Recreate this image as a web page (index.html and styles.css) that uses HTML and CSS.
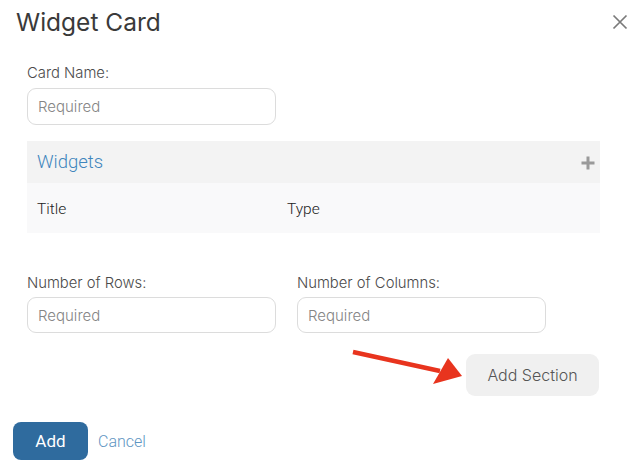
FILE: index.html
```html
<!DOCTYPE html>
<html>
<head>
<meta charset="utf-8">
<link rel="stylesheet" href="styles.css">
</head>
<body>
<div class="dialog">
  <div class="header">
    <h1 class="title">Widget Card</h1>
    <span class="close" aria-label="Close">
      <svg width="16" height="16" viewBox="0 0 16 16"><path d="M1.5 1.5 L14.5 14.5 M14.5 1.5 L1.5 14.5" stroke="#7a7a7a" stroke-width="1.7" fill="none"/></svg>
    </span>
  </div>
  <div class="content">
    <div class="field">
      <label class="label">Card Name:</label>
      <div class="input">Required</div>
    </div>
    <div class="panel">
      <div class="panel-head">
        <span class="panel-title">Widgets</span>
        <svg class="plus" width="14" height="14" viewBox="0 0 14 14"><path d="M7 0.5 V13.5 M0.5 7 H13.5" stroke="#9a9a9a" stroke-width="3" fill="none"/></svg>
      </div>
      <div class="panel-row">
        <span class="col col-title">Title</span>
        <span class="col">Type</span>
      </div>
    </div>
    <div class="pair">
      <div class="field">
        <label class="label">Number of Rows:</label>
        <div class="input">Required</div>
      </div>
      <div class="field">
        <label class="label">Number of Columns:</label>
        <div class="input">Required</div>
      </div>
    </div>
    <div class="section-row">
      <button class="section-btn">Add Section</button>
    </div>
  </div>
  <div class="footer">
    <button class="add-btn">Add</button>
    <a class="cancel">Cancel</a>
  </div>
  <svg class="arrow" width="642" height="473" viewBox="0 0 642 473">
    <path d="M353 352 L440 371" stroke="#e8341e" stroke-width="4.5" fill="none"/>
    <path d="M462 376 L433 384 L448 358 Z" fill="#e8341e"/>
  </svg>
</div>
</body>
</html>
```
FILE: styles.css
```css
html, body {
  margin: 0;
  padding: 0;
  background: #fff;
}
.dialog {
  position: relative;
  width: 642px;
  height: 473px;
  box-sizing: border-box;
  padding: 0 14px 0 16px;
  font-family: "Inter", "Liberation Sans", sans-serif;
  color: #444;
}
.header {
  display: flex;
  justify-content: space-between;
  align-items: center;
  height: 44px;
}
.title {
  margin: 0;
  font-weight: 400;
  font-size: 24.5px;
  line-height: 44px;
  color: #3a3a3a;
}
.close {
  display: flex;
}
.content {
  padding-left: 11px;
  width: 573px;
}
.field {
  display: flex;
  flex-direction: column;
}
.content > .field {
  margin-top: 19px;
}
.label {
  font-size: 14.8px;
  font-weight: 300;
  line-height: 20px;
  color: #4a4a4a;
}
.input {
  box-sizing: border-box;
  width: 249px;
  height: 37px;
  margin-top: 5px;
  border: 1.5px solid #dcdcdc;
  border-radius: 9px;
  padding-left: 10px;
  font-size: 15px;
  font-weight: 300;
  line-height: 36px;
  color: #858585;
}
.panel {
  margin-top: 16px;
  width: 573px;
}
.panel-head {
  display: flex;
  justify-content: space-between;
  align-items: center;
  height: 42px;
  background: #f3f3f3;
  padding: 0 5px 0 10px;
}
.panel-title {
  font-family: "Roboto", sans-serif;
  font-size: 18.5px;
  font-weight: 300;
  color: #3f86bd;
}
.plus {
  margin-top: 2px;
}
.panel-row {
  display: flex;
  align-items: center;
  height: 50px;
  padding-top: 1px;
  box-sizing: border-box;
  background: #f9f9fa;
  padding-left: 10px;
  font-family: "Roboto", sans-serif;
  font-size: 15.5px;
  font-weight: 300;
  color: #222;
}
.col-title {
  width: 250px;
}
.pair {
  display: flex;
  gap: 21px;
  margin-top: 40px;
}
.pair .input {
  margin-top: 4px;
  height: 36px;
  line-height: 35px;
}
.section-row {
  display: flex;
  justify-content: flex-end;
  margin-top: 21px;
  padding-right: 1px;
}
.section-btn {
  width: 133px;
  height: 42px;
  border: none;
  border-radius: 9px;
  background: #f0f0f0;
  font-family: "Inter", sans-serif;
  font-size: 16px;
  font-weight: 300;
  color: #555;
}
.footer {
  display: flex;
  align-items: center;
  gap: 10px;
  margin-top: 26px;
  margin-left: -3px;
}
.add-btn {
  width: 75px;
  height: 38px;
  border: none;
  border-radius: 8px;
  background: #2f6b9e;
  color: #fff;
  font-family: "Roboto", sans-serif;
  font-size: 17px;
}
.cancel {
  font-family: "Roboto", sans-serif;
  font-size: 16px;
  font-weight: 300;
  color: #5e95c2;
}
.arrow {
  position: absolute;
  left: 0;
  top: 0;
  pointer-events: none;
}
```
